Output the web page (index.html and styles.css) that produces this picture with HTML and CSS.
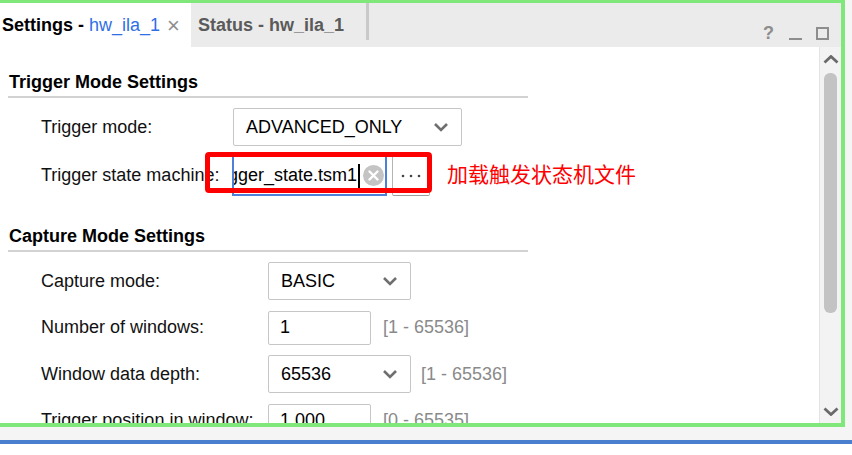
FILE: index.html
```html
<!DOCTYPE html>
<html lang="en">
<head>
<meta charset="utf-8">
<title>Settings - hw_ila_1</title>
<link rel="stylesheet" href="styles.css">
</head>
<body>
<div class="workspace">
  <div class="panel">
    <div class="tabbar">
      <div class="tab tab-active">
        <span class="tab-title">Settings - </span><span class="tab-device">hw_ila_1</span><span class="tab-close">×</span>
      </div>
      <div class="tab tab-idle">Status - hw_ila_1</div>
      <div class="tab-divider"></div>
      <div class="tab-tools">
        <span class="tool-help">?</span>
        <svg class="tool-icon tool-min" width="13" height="13" viewBox="0 0 13 13"><rect x="0" y="11" width="13" height="2" fill="#8d8d8d"/></svg>
        <svg class="tool-icon tool-max" width="13" height="13" viewBox="0 0 13 13"><rect x="1" y="1" width="11" height="11" fill="none" stroke="#8d8d8d" stroke-width="2"/></svg>
      </div>
    </div>

    <div class="body">
      <div class="form">
        <section class="group group-trigger">
          <h2 class="group-title">Trigger Mode Settings</h2>
          <div class="rows">
            <div class="row row-select">
              <span class="row-label">Trigger mode:</span>
              <div class="select select-wide">
                <span class="select-value">ADVANCED_ONLY</span>
                <svg class="chevron" width="16" height="10" viewBox="0 0 16 10"><path d="M2 2 L8 8 L14 2" fill="none" stroke="#6f6f6f" stroke-width="2.6"/></svg>
              </div>
            </div>
            <div class="row row-file">
              <span class="row-label">Trigger state machine:</span>
              <div class="file-field">
                <div class="file-clip">
                  <span class="file-text">trigger_state.tsm1</span><span class="caret"></span>
                </div>
                <svg class="clear" width="21" height="21" viewBox="0 0 21 21"><circle cx="10.5" cy="10.5" r="10.5" fill="#c4c4c4"/><path d="M6.5 6.5 L14.5 14.5 M14.5 6.5 L6.5 14.5" stroke="#fff" stroke-width="2.4" stroke-linecap="round"/></svg>
              </div>
              <button class="browse" type="button">
                <svg width="20" height="4" viewBox="0 0 20 4"><circle cx="2" cy="2" r="1.3" fill="#444"/><circle cx="10" cy="2" r="1.3" fill="#444"/><circle cx="18" cy="2" r="1.3" fill="#444"/></svg>
              </button>
              <span class="note">加载触发状态机文件</span>
              <div class="highlight"></div>
            </div>
          </div>
        </section>

        <section class="group group-capture">
          <h2 class="group-title">Capture Mode Settings</h2>
          <div class="rows">
            <div class="row">
              <span class="row-label">Capture mode:</span>
              <div class="select select-short">
                <span class="select-value">BASIC</span>
                <svg class="chevron" width="16" height="10" viewBox="0 0 16 10"><path d="M2 2 L8 8 L14 2" fill="none" stroke="#6f6f6f" stroke-width="2.6"/></svg>
              </div>
            </div>
            <div class="row">
              <span class="row-label">Number of windows:</span>
              <div class="text-input">1</div>
              <span class="range">[1 - 65536]</span>
            </div>
            <div class="row">
              <span class="row-label">Window data depth:</span>
              <div class="select select-short">
                <span class="select-value">65536</span>
                <svg class="chevron" width="16" height="10" viewBox="0 0 16 10"><path d="M2 2 L8 8 L14 2" fill="none" stroke="#6f6f6f" stroke-width="2.6"/></svg>
              </div>
              <span class="range">[1 - 65536]</span>
            </div>
            <div class="row">
              <span class="row-label">Trigger position in window:</span>
              <div class="text-input">1,000</div>
              <span class="range">[0 - 65535]</span>
            </div>
          </div>
        </section>
      </div>

      <div class="scrollbar">
        <svg class="scroll-arrow scroll-up" width="16" height="9" viewBox="0 0 16 9"><path d="M1.5 7.5 L8 1.5 L14.5 7.5" fill="none" stroke="#6a6a6a" stroke-width="2.8"/></svg>
        <div class="scroll-thumb"></div>
        <svg class="scroll-arrow scroll-down" width="16" height="9" viewBox="0 0 16 9"><path d="M1.5 1.5 L8 7.5 L14.5 1.5" fill="none" stroke="#6a6a6a" stroke-width="2.8"/></svg>
      </div>
    </div>
  </div>
  <div class="accent"></div>
</div>
</body>
</html>
```

FILE: styles.css
```css
* {
  box-sizing: border-box;
}

html,
body {
  margin: 0;
  padding: 0;
  background: #ffffff;
}

body {
  width: 852px;
  height: 455px;
  overflow: hidden;
  font-family: "Liberation Sans", Arial, sans-serif;
  font-size: 18px;
  color: #111111;
}

/* outer frame: panel, grey strip and the blue accent rule */
.workspace {
  background: #f5f5f5;
  height: 444px;
  display: flex;
  flex-direction: column;
}

.panel {
  width: 845px;
  height: 427px;
  flex: none;
  display: flex;
  flex-direction: column;
  background: #ffffff;
  border-top: 3px solid #80e87a;
  border-right: 4px solid #80e87a;
  border-bottom: 4px solid #80e87a;
}

.accent {
  margin-top: auto;
  height: 4px;
  background: #4a7fd0;
}

/* tab strip */
.tabbar {
  height: 44px;
  flex: none;
  display: flex;
  background: #ebebeb;
}

.tab {
  display: flex;
  align-items: center;
  white-space: nowrap;
  line-height: 21px;
}

.tab-active {
  width: 191px;
  padding: 0 0 0 2px;
  background: #ffffff;
}

.tab-title {
  font-weight: bold;
  color: #000000;
  white-space: pre;
}

.tab-device {
  color: #2f6fe6;
}

.tab-close {
  margin-left: 7px;
  font-size: 22px;
  color: #8e8e8e;
}

.tab-idle {
  width: 175px;
  padding-left: 7px;
  font-weight: bold;
  color: #5a5a5a;
}

.tab-divider {
  width: 3px;
  height: 37px;
  background: #c9c9c9;
}

.tab-tools {
  margin-left: auto;
  display: flex;
  align-items: flex-start;
  padding: 24px 12px 0 0;
}

.tool-help {
  font-weight: bold;
  color: #8d8d8d;
  line-height: 13px;
  height: 13px;
}

.tool-icon {
  display: block;
}

.tool-min {
  margin-left: 15px;
}

.tool-max {
  margin-left: 14px;
}

/* form area */
.body {
  flex: 1;
  min-height: 0;
  display: flex;
}

.form {
  flex: 1;
  min-width: 0;
  overflow: hidden;
}

.group-title {
  margin: 0 0 0 8px;
  width: 520px;
  padding: 0 0 3px 1px;
  font-size: 18px;
  line-height: 21px;
  font-weight: bold;
  color: #000000;
  border-bottom: 2px solid #d2d2d2;
}

.group-trigger {
  padding-top: 25px;
}

.group-capture {
  margin-top: 30px;
}

.rows {
  padding-left: 41px;
  display: flex;
  flex-direction: column;
}

.group-trigger .rows {
  margin-top: 10px;
  gap: 9px;
}

.group-capture .rows {
  margin-top: 6px;
}

.row {
  display: flex;
  align-items: center;
  position: relative;
  white-space: nowrap;
}

.group-capture .row {
  height: 46.5px;
}

.row-label {
  flex: none;
  color: #111111;
}

.group-trigger .row-label {
  width: 192px;
}

.group-capture .row-label {
  width: 227px;
}

.select {
  height: 38px;
  display: flex;
  align-items: center;
  padding: 0 12px;
  background: #ffffff;
  border: 1px solid #c6c6c6;
  border-radius: 2px;
}

.select-wide {
  width: 229px;
}

.select-short {
  width: 143px;
}

.select-value {
  flex: 1;
  color: #000000;
}

.chevron {
  display: block;
  flex: none;
}

.text-input {
  width: 103px;
  height: 34px;
  display: flex;
  align-items: center;
  padding: 0 11px;
  color: #000000;
  border: 1px solid #c6c6c6;
  border-radius: 2px;
  background: #ffffff;
}

.range {
  color: #8a8a8a;
}

.text-input + .range {
  margin-left: 12px;
}

.select + .range {
  margin-left: 10px;
}

/* file chooser with focus outline */
.row-file {
  height: 41px;
}

.file-field {
  width: 155px;
  height: 41px;
  margin-left: -1px;
  display: flex;
  align-items: center;
  border: 2px solid #4d80d6;
  background: #ffffff;
}

.file-clip {
  flex: 1;
  min-width: 0;
  height: 100%;
  overflow: hidden;
  display: flex;
  align-items: center;
  justify-content: flex-end;
}

.file-text {
  flex: none;
  color: #000000;
}

.caret {
  flex: none;
  width: 2px;
  height: 24px;
  margin: 0 3px 0 1px;
  background: #000000;
}

.clear {
  flex: none;
  display: block;
  margin-right: 1px;
}

.browse {
  flex: none;
  width: 38px;
  height: 41px;
  margin-left: 5px;
  padding: 0;
  display: flex;
  align-items: center;
  justify-content: center;
  background: #ffffff;
  border: 1px solid #b4b4b4;
  border-bottom-color: #9c9c9c;
  border-radius: 2px;
}

.browse svg {
  display: block;
}

.note {
  margin: 0 0 6px 17px;
  font-family: "Noto Sans CJK SC", "Liberation Sans", sans-serif;
  font-size: 21px;
  line-height: 26px;
  color: #ff0000;
}

/* red annotation frame drawn over the file chooser */
.highlight {
  position: absolute;
  left: 164px;
  top: -3px;
  width: 227px;
  height: 41px;
  border: 5px solid #ff0000;
  border-radius: 4px;
  pointer-events: none;
}

/* vertical scrollbar */
.scrollbar {
  width: 22px;
  flex: none;
  display: flex;
  flex-direction: column;
  align-items: center;
  background: #f3f3f3;
  border-left: 1px solid #e3e3e3;
}

.scroll-arrow {
  display: block;
  flex: none;
}

.scroll-up {
  margin-top: 8px;
}

.scroll-thumb {
  width: 13px;
  height: 240px;
  margin-top: 9px;
  background: #c3c3c3;
  border-radius: 6px;
}

.scroll-down {
  margin-top: auto;
  margin-bottom: 7px;
}
```
